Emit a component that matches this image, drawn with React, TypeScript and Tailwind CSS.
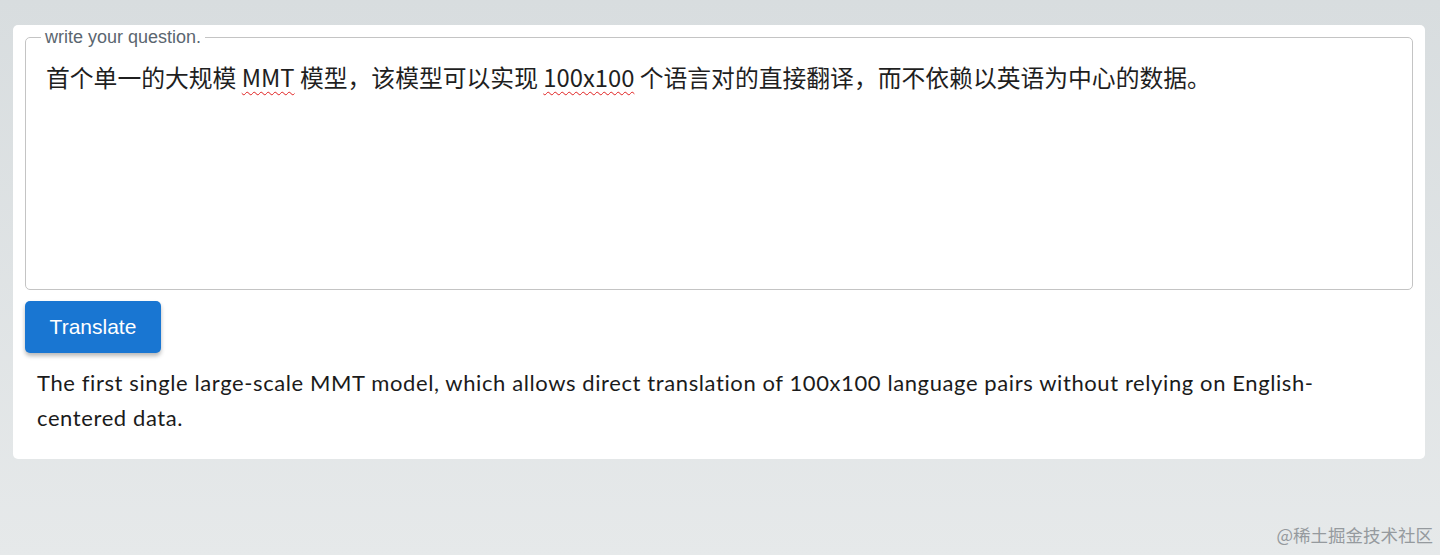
export default function App() {
  return (
    <div className="relative min-h-[555px] w-full bg-gradient-to-b from-[#d8dddf] to-[#e6e9ea] pt-[25px] px-[13px] pr-[15px]">
      <div className="rounded-[5px] bg-white px-3 pt-[2px] pb-[24px]">
        {/* Question field */}
        <fieldset className="h-[263px] rounded-[5px] border border-[#c4c4c4] px-5 pt-[14px]">
          <legend className="-ml-[5px] px-[4px] text-[18px] leading-[20px] text-[#5b6670] [font-family:'Liberation_Sans',Arial,sans-serif]">
            write your question.
          </legend>
          <p className="text-[23.8px] leading-[32px] text-[#1f1f1f] [font-family:'Noto_Sans_CJK_SC','Noto_Sans',sans-serif]">
            首个单一的大规模{" "}
            <span className="underline decoration-wavy decoration-[#e02020] decoration-1 underline-offset-4">MMT</span>{" "}
            模型，该模型可以实现{" "}
            <span className="underline decoration-wavy decoration-[#e02020] decoration-1 underline-offset-4">100x100</span>{" "}
            个语言对的直接翻译，而不依赖以英语为中心的数据。
          </p>
        </fieldset>

        {/* Action */}
        <button className="mt-[11px] h-[52px] w-[136px] rounded-[5px] bg-[#1976d2] text-[21px] text-white shadow-[0_3px_4px_rgba(0,0,0,0.28)] [font-family:'Liberation_Sans',Arial,sans-serif]">
          Translate
        </button>

        {/* Result */}
        <p className="mt-[12px] pl-3 text-[22px] leading-[35px] tracking-[0.6px] text-[#1b1b1b] [font-family:Lato,sans-serif]">
          The first single large-scale MMT model, which allows direct translation of 100x100 language pairs without relying on English-
          <br />
          centered data.
        </p>
      </div>

      <span className="absolute right-[7px] bottom-[7px] text-[17.5px] text-[#959a9e] [font-family:'Noto_Sans_CJK_SC',sans-serif]">
        @稀土掘金技术社区
      </span>
    </div>
  );
}
